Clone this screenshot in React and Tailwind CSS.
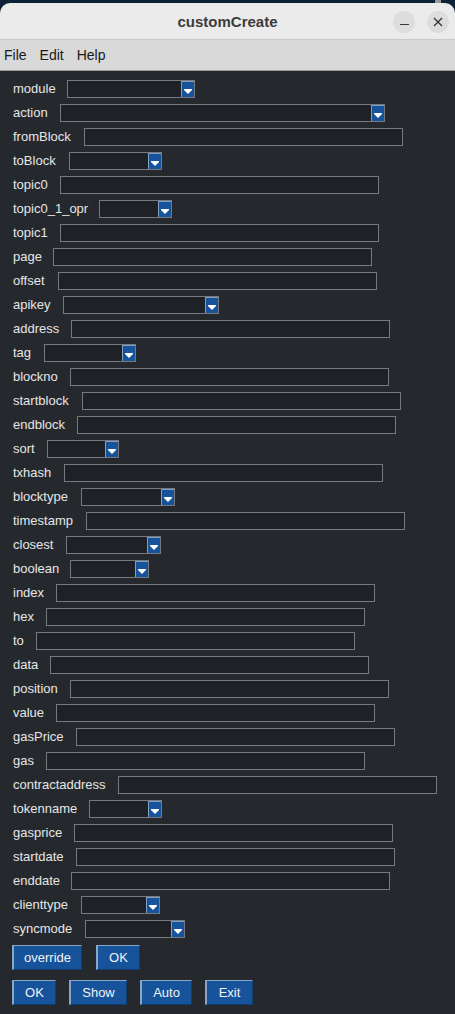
import React from "react";

const rows = [
  ["module", "c", 67, 195],
  ["action", "c", 60, 385],
  ["fromBlock", "i", 84, 403],
  ["toBlock", "c", 69, 162],
  ["topic0", "i", 60, 379],
  ["topic0_1_opr", "c", 99, 172],
  ["topic1", "i", 60, 379],
  ["page", "i", 53, 372],
  ["offset", "i", 58, 377],
  ["apikey", "c", 63, 219],
  ["address", "i", 71, 390],
  ["tag", "c", 44, 136],
  ["blockno", "i", 70, 389],
  ["startblock", "i", 82, 401],
  ["endblock", "i", 77, 396],
  ["sort", "c", 47, 119],
  ["txhash", "i", 64, 383],
  ["blocktype", "c", 81, 175],
  ["timestamp", "i", 86, 405],
  ["closest", "c", 66, 161],
  ["boolean", "c", 70, 149],
  ["index", "i", 56, 375],
  ["hex", "i", 46, 365],
  ["to", "i", 36, 355],
  ["data", "i", 50, 369],
  ["position", "i", 70, 389],
  ["value", "i", 56, 375],
  ["gasPrice", "i", 76, 395],
  ["gas", "i", 46, 365],
  ["contractaddress", "i", 118, 437],
  ["tokenname", "c", 89, 162],
  ["gasprice", "i", 74, 393],
  ["startdate", "i", 76, 395],
  ["enddate", "i", 71, 390],
  ["clienttype", "c", 81, 160],
  ["syncmode", "c", 85, 185],
];

function Arrow() {
  return (
    <svg width="8" height="5" viewBox="0 0 8 5">
      <rect x="0" y="0" width="8" height="1" fill="#ffffff" />
      <polygon points="0,1 8,1 4,5" fill="#ffffff" />
    </svg>
  );
}

function Row({ label, kind, x0, x1 }) {
  return (
    <div className="flex h-[24px] items-center">
      <div
        className="shrink-0 whitespace-nowrap pb-[1px] pl-[13px] text-[13px] leading-none text-[#e6e6e6]"
        style={{ width: x0 }}
      >
        {label}
      </div>
      {kind === "i" ? (
        <div
          className="h-[18px] border border-[#76797d] bg-[#1e2126]"
          style={{ width: x1 - x0 }}
        />
      ) : (
        <div
          className="flex h-[18px] border border-[#76797d] bg-[#1e2126]"
          style={{ width: x1 - x0 }}
        >
          <div className="flex-1" />
          <div className="flex w-[13px] items-end justify-center border-l border-t border-[#7f9fc4] bg-[#16539b] pb-[3px]">
            <Arrow />
          </div>
        </div>
      )}
    </div>
  );
}

function Btn({ children, w }) {
  return (
    <div
      className="flex h-[25px] items-center justify-center border-l-2 border-t border-[#8aa6c6] border-r border-b border-r-[#0f3d70] border-b-[#0f3d70] bg-[#16539b] text-[13px] text-[#f2f2f2]"
      style={{ width: w }}
    >
      {children}
    </div>
  );
}

export default function App() {
  return (
    <div
      className="relative h-[1014px] w-[455px] overflow-hidden bg-[#0c2036]"
      style={{ fontFamily: '"Liberation Sans", Arial, sans-serif' }}
    >
      <div className="absolute right-[14px] top-0 h-[4px] w-[6px] bg-[#9a9a9a]" />
      <div className="absolute inset-x-0 top-[3px] bottom-0 flex flex-col overflow-hidden rounded-t-[10px]">
        {/* title bar */}
        <div className="relative flex h-[37px] shrink-0 items-center justify-center border-b border-[#c9c9c9] bg-[#ebebeb] pt-[2px]">
          <span className="text-[15px] font-bold text-[#3c3c3c]">customCreate</span>
          <div className="absolute right-[40px] top-[8px] flex h-[22px] w-[22px] items-center justify-center rounded-full bg-[#dddddd]">
            <div className="mt-[5px] h-[1.5px] w-[9px] bg-[#3a3a3a]" />
          </div>
          <div className="absolute right-[6px] top-[8px] flex h-[22px] w-[22px] items-center justify-center rounded-full bg-[#dddddd]">
            <svg width="10" height="10" viewBox="0 0 10 10">
              <path d="M1 1 L9 9 M9 1 L1 9" stroke="#3a3a3a" strokeWidth="1.4" />
            </svg>
          </div>
        </div>
        {/* menu bar */}
        <div className="flex h-[31px] shrink-0 items-center gap-[13px] border-b border-[#9a9a9a] bg-[#d9d9d9] pl-[4px] text-[14px] text-[#1a1a1a]">
          <span>File</span>
          <span>Edit</span>
          <span>Help</span>
        </div>
        {/* content */}
        <div className="flex flex-1 flex-col bg-[#25292e] pt-[6px]">
          {rows.map(([l, k, a, b]) => (
            <Row key={l} label={l} kind={k} x0={a} x1={b} />
          ))}
          <div className="mt-[4px] flex gap-[14px] pl-[12px]">
            <Btn w={70}>override</Btn>
            <Btn w={44}>OK</Btn>
          </div>
          <div className="mt-[10px] flex gap-[13px] pl-[12px]">
            <Btn w={44}>OK</Btn>
            <Btn w={58}>Show</Btn>
            <Btn w={52}>Auto</Btn>
            <Btn w={48}>Exit</Btn>
          </div>
        </div>
      </div>
    </div>
  );
}
